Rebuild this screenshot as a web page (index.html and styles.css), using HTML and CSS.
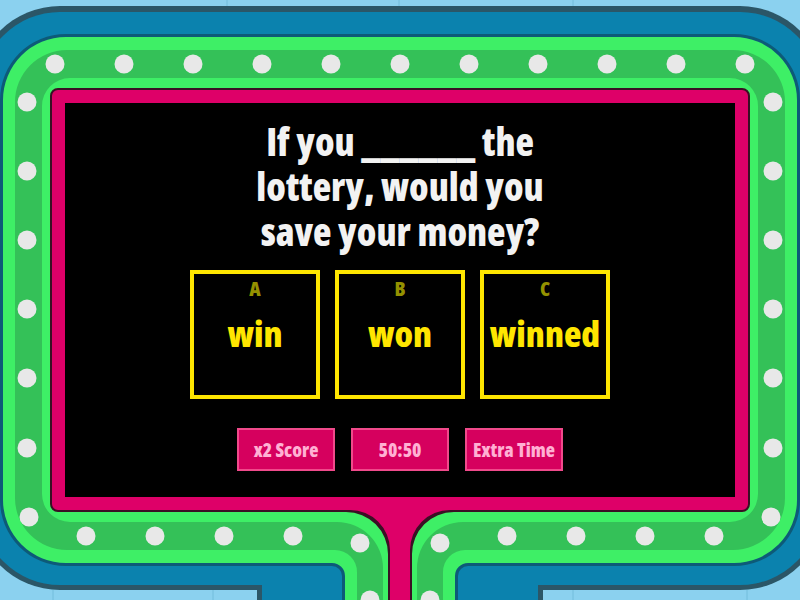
FILE: index.html
```html
<!DOCTYPE html>
<html lang="en">
<head>
<meta charset="utf-8">
<title>Quiz</title>
<link rel="stylesheet" href="styles.css">
</head>
<body>
<div class="stage">
  <svg class="frame" width="800" height="600" viewBox="0 0 800 600" aria-hidden="true">
    <rect x="0" y="0" width="800" height="600" fill="#8bd1ef"/>
    <g stroke="#72bddc" stroke-width="1">
      <line x1="227" y1="0" x2="227" y2="6"/>
      <line x1="399" y1="0" x2="399" y2="6"/>
      <line x1="573" y1="0" x2="573" y2="6"/>
      <line x1="53" y1="590" x2="53" y2="600"/>
      <line x1="213" y1="590" x2="213" y2="600"/>
      <line x1="573" y1="590" x2="573" y2="600"/>
      <line x1="747" y1="590" x2="747" y2="600"/>
    </g>
    <rect x="-25" y="6" width="850" height="584" rx="85" fill="#2b5667"/>
    <rect x="257" y="560" width="286" height="60" fill="#2b5667"/>
    <rect x="-20" y="12" width="840" height="573" rx="80" fill="#0b82ae"/>
    <rect x="262" y="560" width="276" height="60" fill="#0b82ae"/>
    <path fill="#0d5a78" d="M66,34 H734 A66 66 0 0 1 800,100 V500 A66 66 0 0 1 734,566 H468 A10 10 0 0 0 458,576 V620 H342 V576 A10 10 0 0 0 332,566 H66 A66 66 0 0 1 0,500 V100 A66 66 0 0 1 66,34 Z"/>
    <path fill="#3eef66" d="M66,37 H734 A63 63 0 0 1 797,100 V500 A63 63 0 0 1 734,563 H468 A13 13 0 0 0 455,576 V620 H345 V576 A13 13 0 0 0 332,563 H66 A63 63 0 0 1 3,500 V100 A63 63 0 0 1 66,37 Z"/>
    <path fill="#34c158" d="M67,50 H733 A52 52 0 0 1 785,102 V498 A52 52 0 0 1 733,550 H465 A22 22 0 0 0 443,572 V620 H357 V572 A22 22 0 0 0 335,550 H67 A52 52 0 0 1 15,498 V102 A52 52 0 0 1 67,50 Z"/>
    <path fill="#3eef66" d="M70,78 H730 A28 28 0 0 1 758,106 V494 A28 28 0 0 1 730,522 H463 A46 46 0 0 0 417,568 V620 H383 V568 A46 46 0 0 0 337,522 H70 A28 28 0 0 1 42,494 V106 A28 28 0 0 1 70,78 Z"/>
    <path fill="#3a1024" d="M58,88 H742 A8 8 0 0 1 750,96 V504 A8 8 0 0 1 742,512 H454 A42 42 0 0 0 412,554 V620 H388 V554 A42 42 0 0 0 346,512 H58 A8 8 0 0 1 50,504 V96 A8 8 0 0 1 58,88 Z"/>
    <path fill="#de0068" d="M58,90 H742 A6 6 0 0 1 748,96 V504 A6 6 0 0 1 742,510 H450 A40 40 0 0 0 410,550 V620 H390 V550 A40 40 0 0 0 350,510 H58 A6 6 0 0 1 52,504 V96 A6 6 0 0 1 58,90 Z"/>
    <g fill="#e8e8e8">
      <circle cx="55" cy="64" r="9.5"/><circle cx="124" cy="64" r="9.5"/><circle cx="193" cy="64" r="9.5"/>
      <circle cx="262" cy="64" r="9.5"/><circle cx="331" cy="64" r="9.5"/><circle cx="400" cy="64" r="9.5"/>
      <circle cx="469" cy="64" r="9.5"/><circle cx="538" cy="64" r="9.5"/><circle cx="607" cy="64" r="9.5"/>
      <circle cx="676" cy="64" r="9.5"/><circle cx="745" cy="64" r="9.5"/>
      <circle cx="27" cy="102" r="9.5"/><circle cx="27" cy="171" r="9.5"/><circle cx="27" cy="240" r="9.5"/>
      <circle cx="27" cy="309" r="9.5"/><circle cx="27" cy="378" r="9.5"/><circle cx="27" cy="448" r="9.5"/>
      <circle cx="29" cy="517" r="9.5"/>
      <circle cx="773" cy="102" r="9.5"/><circle cx="773" cy="171" r="9.5"/><circle cx="773" cy="240" r="9.5"/>
      <circle cx="773" cy="309" r="9.5"/><circle cx="773" cy="378" r="9.5"/><circle cx="773" cy="448" r="9.5"/>
      <circle cx="771" cy="517" r="9.5"/>
      <circle cx="86" cy="536" r="9.5"/><circle cx="155" cy="536" r="9.5"/><circle cx="224" cy="536" r="9.5"/>
      <circle cx="293" cy="536" r="9.5"/><circle cx="360" cy="543" r="9.5"/>
      <circle cx="440" cy="543" r="9.5"/><circle cx="507" cy="536" r="9.5"/><circle cx="576" cy="536" r="9.5"/>
      <circle cx="645" cy="536" r="9.5"/><circle cx="714" cy="536" r="9.5"/>
      <circle cx="370" cy="600" r="9.5"/><circle cx="430" cy="600" r="9.5"/>
    </g>
  </svg>

  <main class="screen">
    <h1 class="question">
      <span class="q-line">If you ______ the</span>
      <span class="q-line">lottery, would you</span>
      <span class="q-line">save your money?</span>
    </h1>
    <div class="answers">
      <div class="answer"><span class="key">A</span><span class="word">win</span></div>
      <div class="answer"><span class="key">B</span><span class="word">won</span></div>
      <div class="answer"><span class="key">C</span><span class="word">winned</span></div>
    </div>
    <div class="powerups">
      <button class="powerup">x2 Score</button>
      <button class="powerup">50:50</button>
      <button class="powerup">Extra Time</button>
    </div>
  </main>
</div>
</body>
</html>
```

FILE: styles.css
```css
html, body {
  margin: 0;
  padding: 0;
}

body {
  width: 800px;
  height: 600px;
  overflow: hidden;
  background: #8bd1ef;
  font-family: "Open Sans", "DejaVu Sans Condensed", sans-serif;
  font-stretch: 75%;
}

.stage {
  position: relative;
  width: 800px;
  height: 600px;
  padding-top: 103px;
  box-sizing: border-box;
}

.frame {
  position: absolute;
  left: 0;
  top: 0;
  z-index: 0;
  display: block;
}

.screen {
  position: relative;
  z-index: 1;
  margin: 0 65px;
  height: 394px;
  background: #000;
  display: flex;
  flex-direction: column;
  align-items: center;
}

.question {
  margin: 16px 0 0;
  font-size: 38px;
  line-height: 45px;
  font-weight: 800;
  color: #f2f2f2;
  text-align: center;
}

.q-line {
  display: block;
}

.answers {
  display: flex;
  gap: 15px;
  margin-top: 16px;
}

.answer {
  width: 130px;
  height: 129px;
  box-sizing: border-box;
  border: 4px solid #ffe600;
  display: flex;
  flex-direction: column;
  align-items: center;
}

.key {
  margin-top: 4px;
  font-size: 20px;
  line-height: 22px;
  font-weight: 800;
  color: #949100;
}

.word {
  margin-top: 14px;
  font-size: 36px;
  line-height: 40px;
  font-weight: 800;
  color: #ffe600;
}

.powerups {
  display: flex;
  gap: 16px;
  margin-top: 29px;
}

.powerup {
  width: 98px;
  height: 43px;
  box-sizing: border-box;
  padding: 0;
  background: #d6005e;
  border: 2px solid #f04a8b;
  color: #ffb0d3;
  font-family: inherit;
  font-stretch: 75%;
  font-size: 19px;
  font-weight: 800;
}
```
